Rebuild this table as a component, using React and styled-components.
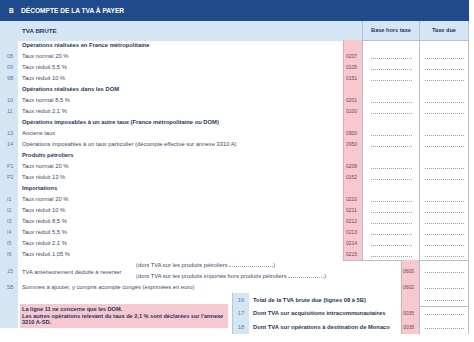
import React from 'react'
import styled, { createGlobalStyle } from 'styled-components'

const GlobalStyle = createGlobalStyle`
  body {
    margin: 0;
    background: #ffffff;
    font-family: "Liberation Sans", Arial, sans-serif;
  }
`

const rows = [
  { h: 'Opérations réalisées en France métropolitaine' },
  { n: '08', t: 'Taux normal 20 %', c: '0207' },
  { n: '09', t: 'Taux réduit 5,5 %', c: '0105' },
  { n: '9B', t: 'Taux réduit 10 %', c: '0151' },
  { h: 'Opérations réalisées dans les DOM' },
  { n: '10', t: 'Taux normal 8,5 %', c: '0201' },
  { n: '11', t: 'Taux réduit 2,1 %', c: '0100' },
  { h: 'Opérations imposables à un autre taux (France métropolitaine ou DOM)' },
  { n: '13', t: 'Anciens taux', c: '0900' },
  { n: '14', t: 'Opérations imposables à un taux particulier (décompte effectué sur annexe 3310 A)', c: '0950' },
  { h: 'Produits pétroliers' },
  { n: 'P1', t: 'Taux normal 20 %', c: '0208' },
  { n: 'P2', t: 'Taux réduit 13 %', c: '0152' },
  { h: 'Importations' },
  { n: 'I1', t: 'Taux normal 20 %', c: '0210' },
  { n: 'I2', t: 'Taux réduit 10 %', c: '0211' },
  { n: 'I3', t: 'Taux réduit 8,5 %', c: '0212' },
  { n: 'I4', t: 'Taux réduit 5,5 %', c: '0213' },
  { n: 'I5', t: 'Taux réduit 2,1 %', c: '0214' },
  { n: 'I6', t: 'Taux réduit 1,05 %', c: '0215' },
]

const totals = [
  { n: '16', t: 'Total de la TVA brute due (lignes 08 à 5B)', c: '', sep: true },
  { n: '17', t: 'Dont TVA sur acquisitions intracommunautaires', c: '0035' },
  { n: '18', t: 'Dont TVA sur opérations à destination de Monaco', c: '0038' },
]

function App() {
  return (
    <Page>
      <GlobalStyle />
      <Header>
        <Letter>B</Letter>
        <span>DÉCOMPTE DE LA TVA À PAYER</span>
      </Header>

      <Row $h={19}>
        <Strip />
        <SubTitle>TVA BRUTE</SubTitle>
        <BlueCell />
        <ColHead>Base hors taxe</ColHead>
        <ColHead $right>Taxe due</ColHead>
      </Row>

      {rows.map((r, i) => {
        const last = i === rows.length - 1
        return (
          <Row key={i} $h={11}>
            <Strip>{r.n}</Strip>
            <Label $bold={!!r.h}>{r.h || r.t}</Label>
            <Code $last={last}>{r.c}</Code>
            <Amount $last={last}>{r.c && <Dots $w={41} />}</Amount>
            <Amount $last={last} $right>{r.c && <Dots $w={39} />}</Amount>
          </Row>
        )
      })}

      <Lower>
        <Strip style={{ gridRow: '1' }}>15</Strip>
        <Wide style={{ gridRow: '1' }}>
          <MainText>TVA antérieurement déduite à reverser</MainText>
          <SubLines>
            <Label>(dont TVA sur les produits pétroliers <Dots $w={44} $inline />)</Label>
            <Label>(dont TVA sur les produits importés hors produits pétroliers <Dots $w={36} $inline />)</Label>
          </SubLines>
        </Wide>
        <Code style={{ gridRow: '1' }}>0600</Code>
        <Amount $right style={{ gridRow: '1' }}><Dots $w={39} /></Amount>

        <Strip style={{ gridRow: '2' }}>5B</Strip>
        <Wide style={{ gridRow: '2' }}>
          <Label>Sommes à ajouter, y compris acompte congés (exprimées en euro)</Label>
        </Wide>
        <Code style={{ gridRow: '2' }}>0602</Code>
        <Amount $right style={{ gridRow: '2' }}><Dots $w={39} /></Amount>

        <StripTail />
        <Note>
          La ligne 11 ne concerne que les DOM.<br />
          Les autres opérations relevant du taux de 2,1 % sont déclarées sur l'annexe<br />
          3310 A-SD.
        </Note>

        {totals.map((r, i) => (
          <React.Fragment key={r.n}>
            <NumBox style={{ gridRow: i + 3 }}>{r.n}</NumBox>
            <TotalLabel style={{ gridRow: i + 3 }}>{r.t}</TotalLabel>
            <Code style={{ gridRow: i + 3 }}>{r.c}</Code>
            <Amount $right $sep={r.sep} style={{ gridRow: i + 3 }}><Dots $w={39} /></Amount>
          </React.Fragment>
        ))}
      </Lower>
    </Page>
  )
}

const Page = styled.div`
    width: 469px;
    font-size: 5.8px;
    color: #3b4a6c;
`
const Header = styled.div`
    height: 21px;
    background: #1f4b8c;
    color: #ffffff;
    font-weight: 700;
    display: flex;
    align-items: center;
    & > span {
        font-size: 6.6px;
    }
`
const Letter = styled.span`
    width: 21px;
    padding-left: 9px;
    box-sizing: border-box;
`
const Row = styled.div`
    display: grid;
    grid-template-columns: 18px 325px 19px 57px 50px;
    height: ${p => p.$h}px;
    line-height: ${p => p.$h}px;
`
const Strip = styled.div`
    background: #d4e5f4;
    padding-left: 7px;
    color: #5f7cae;
    font-size: 5.4px;
`
const StripTail = styled(Strip)`
    grid-row: 3 / 6;
    grid-column: 1;
    margin-bottom: 6px;
`
const SubTitle = styled.div`
    background: #d4e5f4;
    padding-left: 4px;
    font-weight: 700;
    font-size: 6.2px;
    color: #1d3568;
`
const BlueCell = styled.div`
    background: #d4e5f4;
`
const ColHead = styled.div`
    background: #d4e5f4;
    border-left: 1px solid #b9bec8;
    border-right: ${p => (p.$right ? '1px solid #b9bec8' : 'none')};
    border-bottom: 1px solid #b9bec8;
    text-align: center;
    font-weight: 700;
    font-size: 5.6px;
    color: #1d3568;
`
const Label = styled.div`
    padding-left: 4px;
    white-space: nowrap;
    font-weight: ${p => (p.$bold ? 700 : 400)};
    color: ${p => (p.$bold ? '#1d3568' : '#3b4a6c')};
`
const Code = styled.div`
    background: #f7c9ce;
    border-left: 1px solid #e3a8b0;
    border-bottom: ${p => (p.$last ? '1px solid #b9bec8' : 'none')};
    color: #6b4658;
    font-size: 5px;
    padding-left: 2px;
`
const Amount = styled.div`
    border-left: 1px solid #b9bec8;
    border-right: ${p => (p.$right ? '1px solid #b9bec8' : 'none')};
    border-bottom: ${p => (p.$last || p.$sep ? '1px solid #b9bec8' : 'none')};
    display: flex;
    justify-content: center;
    align-items: center;
    padding-top: 3px;
`
const Dots = styled.span`
    display: inline-block;
    width: ${p => p.$w}px;
    height: 0;
    border-bottom: 1px dotted #9aa2b9;
    vertical-align: ${p => (p.$inline ? 'baseline' : 'middle')};
`
const Lower = styled.div`
    display: grid;
    grid-template-columns: 18px 214px 17px 152px 18px 50px;
    grid-template-rows: 22px 11px 14px 13px 14px;
    line-height: 11px;
    & > ${Code} {
        grid-column: 5;
        display: flex;
        align-items: center;
        padding-left: 1px;
    }
    & > ${Strip} {
        display: flex;
        align-items: center;
    }
    & > ${Amount} {
        grid-column: 6;
        padding-top: 2px;
    }
`
const Wide = styled.div`
    grid-column: 2 / 5;
    display: flex;
    align-items: center;
`
const MainText = styled(Label)`
    width: 110px;
    padding-top: 2px;
`
const SubLines = styled.div`
    display: flex;
    flex-direction: column;
`
const Note = styled.div`
    grid-column: 2;
    grid-row: 3 / 6;
    align-self: end;
    margin: 0 4px 6px 2px;
    padding: 2px 2px;
    background: #f7c9ce;
    color: #1d3568;
    font-weight: 700;
    font-size: 5.6px;
    line-height: 6.6px;
`
const NumBox = styled.div`
    grid-column: 3;
    background: #d4e5f4;
    border-left: 1px solid #b9c6d6;
    display: flex;
    align-items: center;
    justify-content: center;
    color: #5f7cae;
`
const TotalLabel = styled.div`
    grid-column: 4;
    display: flex;
    align-items: center;
    padding-left: 4px;
    font-weight: 700;
    color: #1d3568;
    white-space: nowrap;
`

export default App
